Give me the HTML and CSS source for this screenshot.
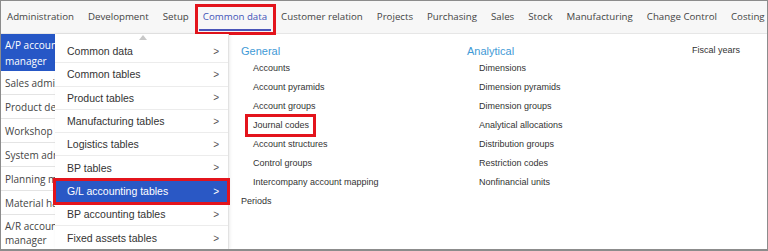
FILE: index.html
```html
<!DOCTYPE html>
<html>
<head>
<meta charset="utf-8">
<link rel="stylesheet" href="styles.css">
</head>
<body>
<div class="frame">
  <nav class="topnav">
    <span class="nav-item">Administration</span>
    <span class="nav-item">Development</span>
    <span class="nav-item">Setup</span>
    <span class="nav-item active">Common data</span>
    <span class="nav-item">Customer relation</span>
    <span class="nav-item">Projects</span>
    <span class="nav-item">Purchasing</span>
    <span class="nav-item">Sales</span>
    <span class="nav-item">Stock</span>
    <span class="nav-item">Manufacturing</span>
    <span class="nav-item">Change Control</span>
    <span class="nav-item">Costing</span>
  </nav>
  <div class="main">
    <aside class="sidebar">
      <div class="side-inner">
        <div class="side-row two selected">A/P accounting<br>manager</div>
        <div class="side-row">Sales administration</div>
        <div class="side-row">Product design</div>
        <div class="side-row">Workshop</div>
        <div class="side-row">System administrator</div>
        <div class="side-row">Planning manager</div>
        <div class="side-row">Material handler</div>
        <div class="side-row two last">A/R accounting<br>manager</div>
      </div>
    </aside>
    <div class="menu">
      <div class="menu-arrow"></div>
      <div class="menu-item"><span>Common data</span><span class="chev">&gt;</span></div>
      <div class="menu-item"><span>Common tables</span><span class="chev">&gt;</span></div>
      <div class="menu-item"><span>Product tables</span><span class="chev">&gt;</span></div>
      <div class="menu-item"><span>Manufacturing tables</span><span class="chev">&gt;</span></div>
      <div class="menu-item"><span>Logistics tables</span><span class="chev">&gt;</span></div>
      <div class="menu-item"><span>BP tables</span><span class="chev">&gt;</span></div>
      <div class="menu-item current"><span>G/L accounting tables</span><span class="chev">&gt;</span></div>
      <div class="menu-item"><span>BP accounting tables</span><span class="chev">&gt;</span></div>
      <div class="menu-item"><span>Fixed assets tables</span><span class="chev">&gt;</span></div>
    </div>
    <section class="panel">
      <div class="col">
        <div class="heading">General</div>
        <div class="link sub">Accounts</div>
        <div class="link sub">Account pyramids</div>
        <div class="link sub">Account groups</div>
        <div class="link sub"><span class="marked">Journal codes</span></div>
        <div class="link sub">Account structures</div>
        <div class="link sub">Control groups</div>
        <div class="link sub">Intercompany account mapping</div>
        <div class="link">Periods</div>
      </div>
      <div class="col">
        <div class="heading">Analytical</div>
        <div class="link sub">Dimensions</div>
        <div class="link sub">Dimension pyramids</div>
        <div class="link sub">Dimension groups</div>
        <div class="link sub">Analytical allocations</div>
        <div class="link sub">Distribution groups</div>
        <div class="link sub">Restriction codes</div>
        <div class="link sub">Nonfinancial units</div>
      </div>
      <div class="col">
        <div class="link top">Fiscal years</div>
      </div>
    </section>
  </div>
</div>
</body>
</html>
```

FILE: styles.css
```css
* { box-sizing: border-box; }
html, body { margin: 0; padding: 0; background: #fff; }

.frame {
  width: 768px;
  height: 251px;
  border: 1px solid #8c8c8c;
  border-bottom-width: 2px;
  overflow: hidden;
  display: flex;
  flex-direction: column;
  background: #fff;
}

.topnav {
  height: 33px;
  flex: none;
  display: flex;
  align-items: center;
  gap: 14px;
  padding-left: 6px;
  background: #f7f7f7;
  border-bottom: 1px solid #e6e6e6;
  font-family: "Open Sans", "Noto Sans", sans-serif;
  font-size: 9.7px;
  color: #444;
  white-space: nowrap;
}

.nav-item { position: relative; line-height: 14px; }
.nav-item.active { color: #4354b8; }
.nav-item.active::before {
  content: "";
  position: absolute;
  top: -6px;
  bottom: -11px;
  left: -8px;
  right: -9px;
  border: 3px solid #e3141c;
}
.nav-item.active::after {
  content: "";
  position: absolute;
  left: -4px;
  right: -4px;
  bottom: -7px;
  height: 2px;
  background: #4a55b8;
}

.main {
  flex: 1;
  display: flex;
  min-height: 0;
}

.sidebar {
  width: 54px;
  flex: none;
  overflow: hidden;
  font-family: "Open Sans", "Noto Sans", sans-serif;
  font-size: 10px;
  color: #444;
}
.side-inner { width: 140px; }
.side-row {
  height: 24px;
  line-height: 24px;
  padding-left: 4px;
  white-space: nowrap;
  border-bottom: 1px solid #e4e4e4;
}
.side-row.two {
  height: 37px;
  line-height: 16px;
  padding-top: 3px;
}
.side-row.selected {
  background: #2657c6;
  color: #fff;
  border-bottom: none;
}
.side-row.last { border-bottom: none; height: 40px; padding-top: 4px; line-height: 14px; }

.menu {
  width: 174px;
  flex: none;
  position: relative;
  background: #fff;
  padding-top: 6px;
  border-right: 1px solid #e2e2e2;
  box-shadow: 1px 0 3px rgba(0,0,0,0.08);
  font-family: "Liberation Sans", Arial, sans-serif;
  font-size: 10.5px;
  color: #333;
}
.menu-arrow {
  position: absolute;
  top: 1px;
  left: 84px;
  width: 0;
  height: 0;
  border-left: 4px solid transparent;
  border-right: 4px solid transparent;
  border-bottom: 5px solid #c8c8c8;
}
.menu-item {
  height: 23.3px;
  display: flex;
  align-items: center;
  justify-content: space-between;
  padding: 0 9px 0 12px;
  border-bottom: 1px solid #ececec;
}
.menu-item:last-child { border-bottom: none; }
.chev { font-size: 10px; color: #555; }
.menu-item.current {
  background: #2a58c5;
  color: #fff;
  outline: 3px solid #e3141c;
  outline-offset: -1px;
  border-bottom: none;
}
.menu-item.current .chev { color: #fff; }

.panel {
  flex: 1;
  display: grid;
  grid-template-columns: 226px 225px 1fr;
  padding: 9px 0 0 12px;
  font-family: "Liberation Sans", Arial, sans-serif;
  font-size: 9px;
  color: #333;
}
.heading {
  font-size: 11px;
  color: #3f9ad6;
  line-height: 16px;
}
.link { line-height: 19px; white-space: nowrap; }
.link.sub { padding-left: 12px; }
.link.top { line-height: 15px; }
.marked {
  display: inline-block;
  margin-left: -6px;
  padding: 0 5px 0 6px;
  outline: 3px solid #e3141c;
  outline-offset: -1px;
}
```
